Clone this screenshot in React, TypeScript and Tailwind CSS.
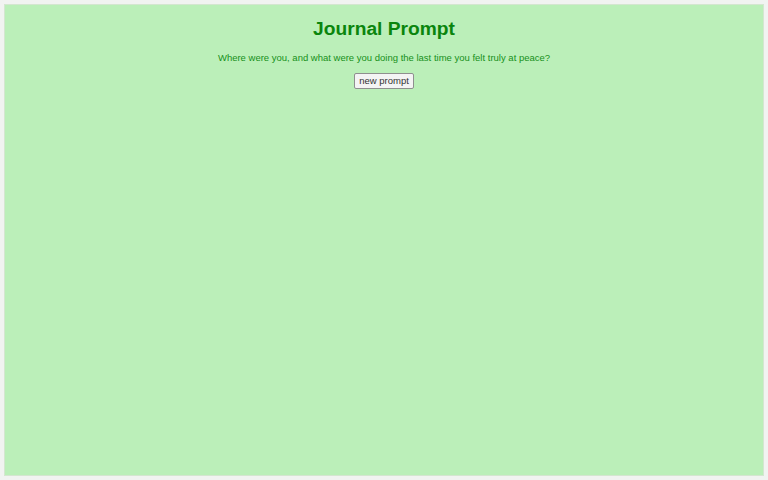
export default function App() {
  return (
    <div className="h-[480px] w-[768px] bg-[#f1f3f1] p-[4px] font-['Liberation_Sans',Arial,sans-serif]">
      <div className="flex h-[472px] flex-col items-center border border-[#d4e6d0] bg-[#bbefb9]">
        <h1 className="mt-[13px] text-[19.2px] font-bold leading-[22px] text-[#0a850d]">Journal Prompt</h1>
        <p className="mt-[12px] text-[9.5px] leading-[12px] text-[#17901a]">
          Where were you, and what were you doing the last time you felt truly at peace?
        </p>
        <button className="mt-[9px] h-[16px] w-[60px] rounded-[2px] border border-[#8f8f8f] bg-[#f4f4f4] text-[9.5px] leading-[12px] text-[#333]">
          new prompt
        </button>
      </div>
    </div>
  );
}
